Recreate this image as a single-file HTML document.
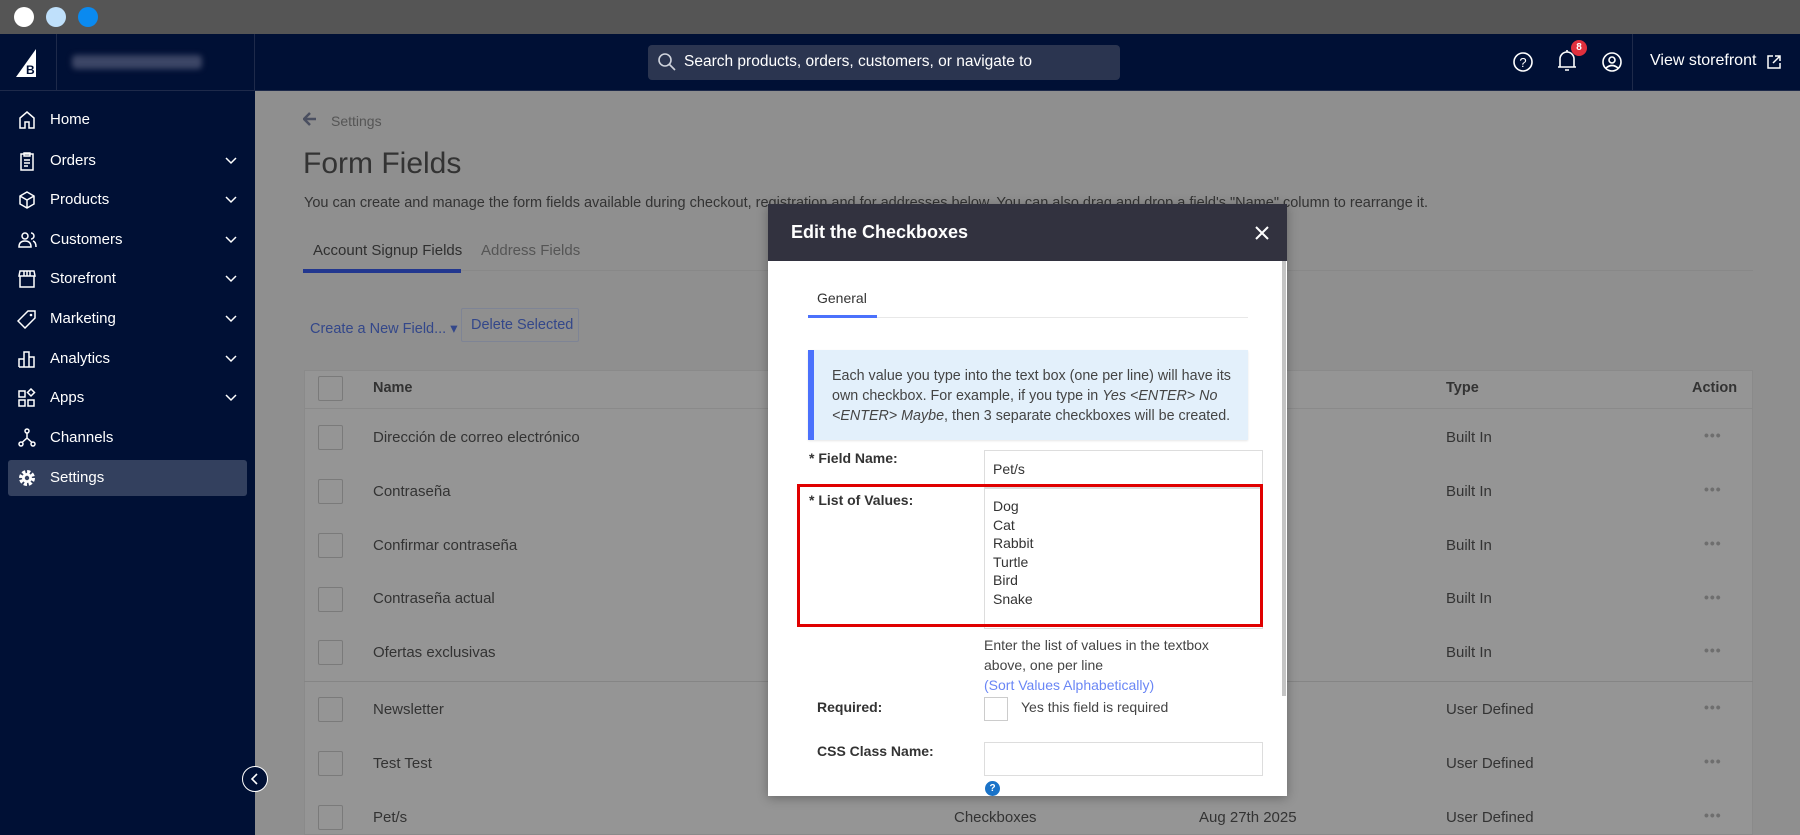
<!DOCTYPE html>
<html><head><meta charset="utf-8"><style>
*{box-sizing:border-box;margin:0;padding:0}
body{width:1800px;height:835px;overflow:hidden;font-family:"Liberation Sans",sans-serif;background:#8f8f8f;position:relative}
.a{position:absolute}
.top{left:0;top:0;width:1800px;height:34px;background:#555}
.dot{width:20px;height:20px;border-radius:50%;top:7px}
.nav{left:0;top:34px;width:1800px;height:57px;background:#001035;border-bottom:1px solid #1e2a4a}
.side{left:0;top:91px;width:255px;height:744px;background:#001035}
.si{left:0;width:255px;height:36px;color:#fff;font-size:15px}
.si span{position:absolute;left:50px;top:9px}
.si svg{position:absolute;left:17px;top:8px}
.si .ch{position:absolute;left:225px;top:11px}
.t{color:#333;font-size:15px;position:absolute;white-space:nowrap}
.cb{position:absolute;width:25px;height:25px;border:1px solid #7a7a7a;border-radius:2px;background:#959595;left:318px}
.dots{position:absolute;left:1704px;color:#6e6e6e;font-size:14px;letter-spacing:1px;font-weight:bold}
.modal{left:768px;top:204px;width:519px;height:592px;background:#fff;box-shadow:0 2px 10px rgba(0,0,0,.3)}
.mh{left:0;top:0;width:519px;height:57px;background:#32323f;color:#fff;font-weight:bold;font-size:18px}
.lbl{position:absolute;font-weight:bold;font-size:14px;color:#333}
.inp{position:absolute;left:216px;width:279px;border:1px solid #ddd;background:#fff}
.mt{position:absolute;font-size:14px;color:#333}
</style></head><body>
<div class="a top"></div>
<div class="a dot" style="left:14px;background:#fff"></div>
<div class="a dot" style="left:46px;background:#bfe0fb"></div>
<div class="a dot" style="left:78px;background:#0a8af0"></div>
<div class="a nav">
 <svg class="a" style="left:16px;top:15px" width="24" height="28" viewBox="0 0 24 28"><path d="M20 0 L20 28 L0 28 Z" fill="#fff"/><text x="10" y="25" font-size="12" font-weight="bold" fill="#001035" font-family="Liberation Sans">B</text></svg>
 <div class="a" style="left:56px;top:0;width:1px;height:57px;background:#1e2a4a"></div>
 <div class="a" style="left:72px;top:21px;width:130px;height:14px;background:#3c4666;filter:blur(3px);border-radius:4px"></div>
 <div class="a" style="left:254px;top:0;width:1px;height:57px;background:#1e2a4a"></div>
 <div class="a" style="left:648px;top:11px;width:472px;height:35px;background:#2b3550;border-radius:4px"></div>
 <svg class="a" style="left:657px;top:18px" width="20" height="20" viewBox="0 0 20 20"><circle cx="8" cy="8" r="6" stroke="#cfd3dc" stroke-width="1.6" fill="none"/><path d="M12.5 12.5 L18 18" stroke="#cfd3dc" stroke-width="1.6"/></svg>
 <div class="a" style="left:684px;top:19px;color:#fff;font-size:15.5px">Search products, orders, customers, or navigate to</div>
 <svg class="a" style="left:1512px;top:17px" width="22" height="22" viewBox="0 0 22 22"><circle cx="11" cy="11" r="9" stroke="#fff" stroke-width="1.6" fill="none"/><text x="11" y="16" text-anchor="middle" font-size="13" fill="#fff" font-family="Liberation Sans">?</text></svg>
 <svg class="a" style="left:1556px;top:15px" width="22" height="24" viewBox="0 0 22 24"><path d="M4 18 L4 10 A7 7 0 0 1 18 10 L18 18 Z M2 18 H20 M9 21 H13 M11 1 V3" stroke="#fff" stroke-width="1.6" fill="none"/></svg>
 <div class="a" style="left:1571px;top:6px;width:16px;height:16px;border-radius:50%;background:#e0303d;color:#fff;font-size:10px;text-align:center;line-height:16px;font-weight:bold">8</div>
 <svg class="a" style="left:1601px;top:17px" width="22" height="22" viewBox="0 0 22 22"><circle cx="11" cy="11" r="9" stroke="#fff" stroke-width="1.6" fill="none"/><circle cx="11" cy="9" r="3" stroke="#fff" stroke-width="1.6" fill="none"/><path d="M5 17 Q11 12 17 17" stroke="#fff" stroke-width="1.6" fill="none"/></svg>
 <div class="a" style="left:1632px;top:0;width:1px;height:57px;background:#1e2a4a"></div>
 <div class="a" style="left:1650px;top:18px;color:#fff;font-size:16px">View storefront</div>
 <svg class="a" style="left:1766px;top:20px" width="16" height="16" viewBox="0 0 16 16"><path d="M7 2 H2 V14 H14 V9 M9 2 H14 V7 M14 2 L7 9" stroke="#fff" stroke-width="1.5" fill="none"/></svg>
</div>
<div class="a side">
 <div class="a si" style="top:11px"><svg width="20" height="20" viewBox="0 0 20 20"><path d="M3 18 V8 L10 2 L17 8 V18 H12 V12 H8 V18 Z" stroke="#fff" stroke-width="1.5" fill="none"/></svg><span>Home</span></div>
 <div class="a si" style="top:52px"><svg width="20" height="20" viewBox="0 0 20 20"><rect x="4" y="3" width="12" height="16" stroke="#fff" stroke-width="1.5" fill="none"/><path d="M7 2 H13 V5 H7Z M7 9 H13 M7 12 H13 M7 15 H11" stroke="#fff" stroke-width="1.4" fill="none"/></svg><span>Orders</span><svg class="ch" width="12" height="12" viewBox="0 0 12 12"><path d="M1 4 L6 9 L11 4" stroke="#fff" stroke-width="1.5" fill="none"/></svg></div>
 <div class="a si" style="top:91px"><svg width="20" height="20" viewBox="0 0 20 20"><path d="M10 2 L17 6 V14 L10 18 L3 14 V6 Z M3 6 L10 10 L17 6 M10 10 V18" stroke="#fff" stroke-width="1.5" fill="none"/></svg><span>Products</span><svg class="ch" width="12" height="12" viewBox="0 0 12 12"><path d="M1 4 L6 9 L11 4" stroke="#fff" stroke-width="1.5" fill="none"/></svg></div>
 <div class="a si" style="top:131px"><svg width="20" height="20" viewBox="0 0 20 20"><circle cx="8" cy="6" r="3" stroke="#fff" stroke-width="1.5" fill="none"/><path d="M2 17 Q2 11 8 11 Q14 11 14 17 Z M14 3 A3 3 0 0 1 14 9 M16 11 Q19 12 19 17" stroke="#fff" stroke-width="1.5" fill="none"/></svg><span>Customers</span><svg class="ch" width="12" height="12" viewBox="0 0 12 12"><path d="M1 4 L6 9 L11 4" stroke="#fff" stroke-width="1.5" fill="none"/></svg></div>
 <div class="a si" style="top:170px"><svg width="20" height="20" viewBox="0 0 20 20"><path d="M3 2 H17 L18 7 H2 Z M3 7 V18 H17 V7 M7 2 V7 M10 2 V7 M13 2 V7" stroke="#fff" stroke-width="1.5" fill="none"/></svg><span>Storefront</span><svg class="ch" width="12" height="12" viewBox="0 0 12 12"><path d="M1 4 L6 9 L11 4" stroke="#fff" stroke-width="1.5" fill="none"/></svg></div>
 <div class="a si" style="top:210px"><svg width="20" height="20" viewBox="0 0 20 20"><path d="M11 2 H18 V9 L8 19 L1 12 Z" stroke="#fff" stroke-width="1.5" fill="none"/><circle cx="14" cy="6" r="1.3" fill="#fff"/></svg><span>Marketing</span><svg class="ch" width="12" height="12" viewBox="0 0 12 12"><path d="M1 4 L6 9 L11 4" stroke="#fff" stroke-width="1.5" fill="none"/></svg></div>
 <div class="a si" style="top:250px"><svg width="20" height="20" viewBox="0 0 20 20"><path d="M2 18 V10 H7 V18 M7 18 V3 H12 V18 M12 18 V8 H17 V18 H2" stroke="#fff" stroke-width="1.5" fill="none"/></svg><span>Analytics</span><svg class="ch" width="12" height="12" viewBox="0 0 12 12"><path d="M1 4 L6 9 L11 4" stroke="#fff" stroke-width="1.5" fill="none"/></svg></div>
 <div class="a si" style="top:289px"><svg width="20" height="20" viewBox="0 0 20 20"><rect x="2" y="3" width="6" height="6" stroke="#fff" stroke-width="1.5" fill="none"/><rect x="2" y="12" width="6" height="6" stroke="#fff" stroke-width="1.5" fill="none"/><rect x="11" y="12" width="6" height="6" stroke="#fff" stroke-width="1.5" fill="none"/><path d="M14 1 L17.5 4.5 L14 8 L10.5 4.5 Z" stroke="#fff" stroke-width="1.5" fill="none"/></svg><span>Apps</span><svg class="ch" width="12" height="12" viewBox="0 0 12 12"><path d="M1 4 L6 9 L11 4" stroke="#fff" stroke-width="1.5" fill="none"/></svg></div>
 <div class="a si" style="top:329px"><svg width="20" height="20" viewBox="0 0 20 20"><circle cx="10" cy="3" r="2" stroke="#fff" stroke-width="1.5" fill="none"/><circle cx="4" cy="16" r="2" stroke="#fff" stroke-width="1.5" fill="none"/><circle cx="16" cy="16" r="2" stroke="#fff" stroke-width="1.5" fill="none"/><path d="M10 5 V10 L5 14.5 M10 10 L15 14.5" stroke="#fff" stroke-width="1.5" fill="none"/></svg><span>Channels</span></div>
 <div class="a" style="left:8px;top:369px;width:239px;height:36px;background:#33405e;border-radius:3px"></div>
 <div class="a si" style="top:369px"><svg width="20" height="20" viewBox="0 0 20 20"><circle cx="10" cy="10" r="6" stroke="#fff" stroke-width="4" fill="none" stroke-dasharray="3 1.7"/><circle cx="10" cy="10" r="5" fill="#fff"/><circle cx="10" cy="10" r="2.2" fill="#33405e"/></svg><span>Settings</span></div>
 <div class="a" style="left:242px;top:675px;width:26px;height:26px;border-radius:50%;background:#001035;border:1.5px solid #fff"></div>
 <svg class="a" style="left:250px;top:682px" width="10" height="12" viewBox="0 0 10 12"><path d="M7 1 L2 6 L7 11" stroke="#fff" stroke-width="1.6" fill="none"/></svg>
</div>
<!-- main -->
<svg class="a" style="left:303px;top:112px" width="14" height="14" viewBox="0 0 14 14"><path d="M7 1 L1 7 L7 13 M1 7 H13" stroke="#4a4f60" stroke-width="2.5" fill="none"/></svg>
<div class="t" style="left:331px;top:113px;color:#555;font-size:14px">Settings</div>
<div class="t" style="left:303px;top:147px;font-size:30px;color:#333">Form Fields</div>
<div class="t" style="left:304px;top:195px;font-size:14.5px">You can create and manage the form fields available during checkout, registration and for addresses below. You can also drag and drop a field's "Name" column to rearrange it.</div>
<div class="t" style="left:313px;top:242px;font-size:15px;color:#2f2f2f">Account Signup Fields</div>
<div class="t" style="left:481px;top:242px;font-size:15px;color:#555">Address Fields</div>
<div class="a" style="left:303px;top:270px;width:1450px;height:1px;background:#888"></div>
<div class="a" style="left:303px;top:269px;width:158px;height:4px;background:#22378f"></div>
<div class="t" style="left:310px;top:321px;color:#33478a;font-size:14.5px">Create a New Field... ▾</div>
<div class="a" style="left:461px;top:308px;width:118px;height:34px;border:1px solid #7e8495;border-radius:2px"></div>
<div class="t" style="left:471px;top:317px;color:#33478a;font-size:14.5px">Delete Selected</div>
<div class="a" style="left:304px;top:370px;width:1449px;height:465px;background:#959595;border:1px solid #8a8a8a"></div>
<div class="a" style="left:304px;top:408px;width:1449px;height:1px;background:#8a8a8a"></div>
<div class="a" style="left:304px;top:681px;width:1449px;height:1px;background:#858585"></div>
<div class="cb" style="top:376px"></div><div class="t" style="left:373px;top:380px;font-weight:bold;font-size:14.5px">Name</div>
<div class="t" style="left:1446px;top:380px;font-weight:bold;font-size:14.5px">Type</div>
<div class="t" style="left:1692px;top:380px;font-weight:bold;font-size:14.5px">Action</div>
<div class="cb" style="top:425px"></div><div class="t" style="left:373px;top:429px">Dirección de correo electrónico</div><div class="t" style="left:1446px;top:429px">Built In</div><div class="dots" style="top:427px">•••</div>
<div class="cb" style="top:479px"></div><div class="t" style="left:373px;top:483px">Contraseña</div><div class="t" style="left:1446px;top:483px">Built In</div><div class="dots" style="top:481px">•••</div>
<div class="cb" style="top:533px"></div><div class="t" style="left:373px;top:537px">Confirmar contraseña</div><div class="t" style="left:1446px;top:537px">Built In</div><div class="dots" style="top:535px">•••</div>
<div class="cb" style="top:587px"></div><div class="t" style="left:373px;top:590px">Contraseña actual</div><div class="t" style="left:1446px;top:590px">Built In</div><div class="dots" style="top:589px">•••</div>
<div class="cb" style="top:640px"></div><div class="t" style="left:373px;top:644px">Ofertas exclusivas</div><div class="t" style="left:1446px;top:644px">Built In</div><div class="dots" style="top:642px">•••</div>
<div class="cb" style="top:697px"></div><div class="t" style="left:373px;top:701px">Newsletter</div><div class="t" style="left:1446px;top:701px">User Defined</div><div class="dots" style="top:699px">•••</div>
<div class="cb" style="top:751px"></div><div class="t" style="left:373px;top:755px">Test Test</div><div class="t" style="left:1446px;top:755px">User Defined</div><div class="dots" style="top:753px">•••</div>
<div class="cb" style="top:805px"></div><div class="t" style="left:373px;top:809px">Pet/s</div><div class="t" style="left:954px;top:809px">Checkboxes</div><div class="t" style="left:1199px;top:809px">Aug 27th 2025</div><div class="t" style="left:1446px;top:809px">User Defined</div><div class="dots" style="top:807px">•••</div>
<!-- modal -->
<div class="a modal">
 <div class="a mh"><span class="a" style="left:23px;top:18px">Edit the Checkboxes</span>
  <svg class="a" style="left:486px;top:21px" width="16" height="16" viewBox="0 0 16 16"><path d="M2 2 L14 14 M14 2 L2 14" stroke="#fff" stroke-width="2"/></svg></div>
 <div class="a" style="left:514px;top:57px;width:4px;height:435px;background:#c4c4c4"></div>
 <div class="mt" style="left:49px;top:86px">General</div>
 <div class="a" style="left:40px;top:113px;width:440px;height:1px;background:#e8e8e8"></div>
 <div class="a" style="left:40px;top:111px;width:69px;height:3px;background:#4b71fc"></div>
 <div class="a" style="left:40px;top:146px;width:440px;height:90px;background:#e3f0fb;border-left:6px solid #4b71fc;box-shadow:0 1px 2px rgba(0,0,0,.1)"></div>
 <div class="mt" style="left:64px;top:162px;font-size:14.3px;line-height:20px;color:#444">Each value you type into the text box (one per line) will have its<br>own checkbox. For example, if you type in <i>Yes &lt;ENTER&gt; No</i><br><i>&lt;ENTER&gt; Maybe</i>, then 3 separate checkboxes will be created.</div>
 <div class="lbl" style="left:41px;top:246px">* Field Name:</div>
 <div class="inp" style="top:246px;height:38px"><span class="mt" style="left:8px;top:10px">Pet/s</span></div>
 <div class="lbl" style="left:41px;top:288px">* List of Values:</div>
 <div class="inp" style="top:284px;height:141px"><div class="mt" style="left:8px;top:8px;line-height:18.6px">Dog<br>Cat<br>Rabbit<br>Turtle<br>Bird<br>Snake</div></div>
 <div class="a" style="left:29px;top:280px;width:466px;height:143px;border:3px solid #e00000"></div>
 <div class="mt" style="left:216px;top:431px;line-height:20px;color:#444">Enter the list of values in the textbox<br>above, one per line<br><span style="color:#6a86f5">(Sort Values Alphabetically)</span></div>
 <div class="lbl" style="left:49px;top:495px">Required:</div>
 <div class="a" style="left:216px;top:493px;width:24px;height:24px;border:1px solid #ccc"></div>
 <div class="mt" style="left:253px;top:495px;color:#444">Yes this field is required</div>
 <div class="lbl" style="left:49px;top:539px">CSS Class Name:</div>
 <div class="inp" style="top:538px;height:34px"></div>
 <div class="a" style="left:217px;top:577px;width:15px;height:15px;border-radius:50%;background:#1a73c8;color:#fff;font-size:10px;font-weight:bold;text-align:center;line-height:15px">?</div>
</div>
</body></html>
